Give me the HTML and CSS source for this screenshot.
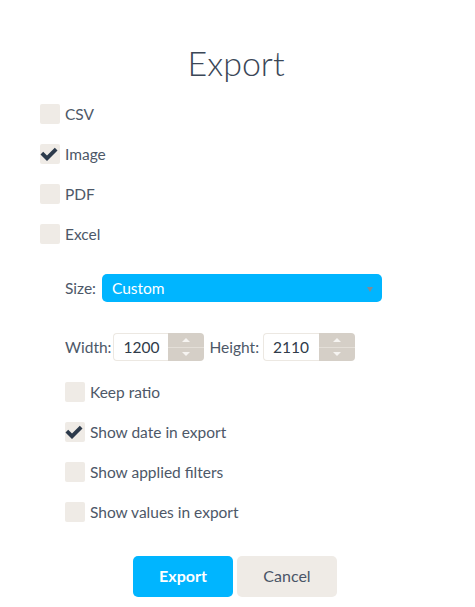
FILE: index.html
```html
<!DOCTYPE html>
<html>
<head>
<meta charset="utf-8">
<link rel="stylesheet" href="styles.css">
</head>
<body>
<div class="dialog">
  <h1 class="title">Export</h1>
  <div class="formats">
    <label class="row"><span class="box"></span><span class="lbl">CSV</span></label>
    <label class="row"><span class="box checked"><svg viewBox="0 0 20 20" width="20" height="20"><path d="M1.5 10.5 L4.2 7.8 L8 11.6 L15.8 3.8 L18.5 6.5 L8 17 Z" fill="#2c3a4b"/></svg></span><span class="lbl">Image</span></label>
    <label class="row"><span class="box"></span><span class="lbl">PDF</span></label>
    <label class="row"><span class="box"></span><span class="lbl">Excel</span></label>
  </div>
  <div class="options">
    <div class="size-row">
      <span class="lbl">Size:</span>
      <div class="select"><span>Custom</span><span class="caret"></span></div>
    </div>
    <div class="dims">
      <span class="lbl">Width:</span>
      <div class="num"><span class="val">1200</span><span class="spin"><span class="up"></span><span class="down"></span></span></div>
      <span class="lbl lbl-h">Height:</span>
      <div class="num"><span class="val">2110</span><span class="spin"><span class="up"></span><span class="down"></span></span></div>
    </div>
    <div class="extras">
      <label class="row"><span class="box"></span><span class="lbl">Keep ratio</span></label>
      <label class="row"><span class="box checked"><svg viewBox="0 0 20 20" width="20" height="20"><path d="M1.5 10.5 L4.2 7.8 L8 11.6 L15.8 3.8 L18.5 6.5 L8 17 Z" fill="#2c3a4b"/></svg></span><span class="lbl">Show date in export</span></label>
      <label class="row"><span class="box"></span><span class="lbl">Show applied filters</span></label>
      <label class="row"><span class="box"></span><span class="lbl">Show values in export</span></label>
    </div>
  </div>
  <div class="buttons">
    <button class="btn primary">Export</button>
    <button class="btn secondary">Cancel</button>
  </div>
</div>
</body>
</html>
```
FILE: styles.css
```css
* { box-sizing: border-box; }
html, body { margin: 0; padding: 0; background: #fff; }
body {
  font-family: Lato, "Open Sans", sans-serif;
  color: #4a5566;
  width: 475px;
  height: 607px;
}
.dialog { padding: 0 40px; }
.title {
  margin: 43px 3px 11px 0;
  height: 40px;
  line-height: 40px;
  text-align: center;
  font-weight: 300;
  font-size: 34px;
  color: #3b4757;
}
.row {
  display: flex;
  align-items: center;
  height: 40px;
  gap: 5px;
}
.box {
  width: 20px;
  height: 20px;
  background: #efebe6;
  border-radius: 2px;
  flex: none;
  position: relative;
}
.box svg { position: absolute; left: -1px; top: 0; }
.lbl { font-size: 15.5px; color: #4d5868; white-space: nowrap; }
.options { padding-left: 25px; }
.size-row {
  display: flex;
  align-items: center;
  gap: 6px;
  margin-top: 20px;
}
.select {
  width: 280px;
  height: 28px;
  background: #00b5ff;
  border-radius: 5px;
  color: #fff;
  font-size: 15.5px;
  display: flex;
  align-items: center;
  justify-content: space-between;
  padding: 0 9px 0 10px;
}
.caret {
  width: 0; height: 0;
  border-left: 3.5px solid transparent;
  border-right: 3.5px solid transparent;
  border-top: 5px solid #7f8a94;
  margin-top: 2px;
}
.dims {
  display: flex;
  align-items: center;
  margin-top: 31px;
  height: 28px;
}
.dims .lbl { margin-right: 2px; }
.dims .lbl-h { margin-right: 4px; }
.num {
  display: flex;
  height: 28px;
  width: 91px;
  margin-right: 5px;
}
.num + .lbl + .num { width: 92px; }
.val {
  flex: 1;
  border: 1px solid #ece8e2;
  border-right: none;
  border-radius: 4px 0 0 4px;
  font-size: 15.5px;
  color: #2f3b4a;
  display: flex;
  align-items: center;
  padding-left: 9px;
}
.spin {
  width: 36px;
  background: #d5cfc7;
  border-radius: 0 4px 4px 0;
  display: flex;
  flex-direction: column;
}
.spin .up, .spin .down {
  flex: 1;
  position: relative;
}
.spin .up { border-bottom: 1px solid #e4dfd8; }
.spin .up::after, .spin .down::after {
  content: "";
  position: absolute;
  left: 50%;
  top: 50%;
  transform: translate(-50%, -50%);
  width: 0; height: 0;
  border-left: 4px solid transparent;
  border-right: 4px solid transparent;
}
.spin .up::after { border-bottom: 4px solid #f6f4f1; }
.spin .down::after { border-top: 4px solid #f6f4f1; }
.extras { margin-top: 11px; }
.buttons {
  display: flex;
  justify-content: center;
  gap: 4px;
  margin-top: 24px;
  padding-right: 5px;
}
.btn {
  width: 100px;
  height: 41px;
  border: none;
  border-radius: 5px;
  font-family: inherit;
  font-size: 16px;
  padding: 0 0 2px;
}
.primary { background: #00b5ff; color: #fff; font-weight: 700; }
.secondary { background: #efebe6; color: #4a5566; }
```
